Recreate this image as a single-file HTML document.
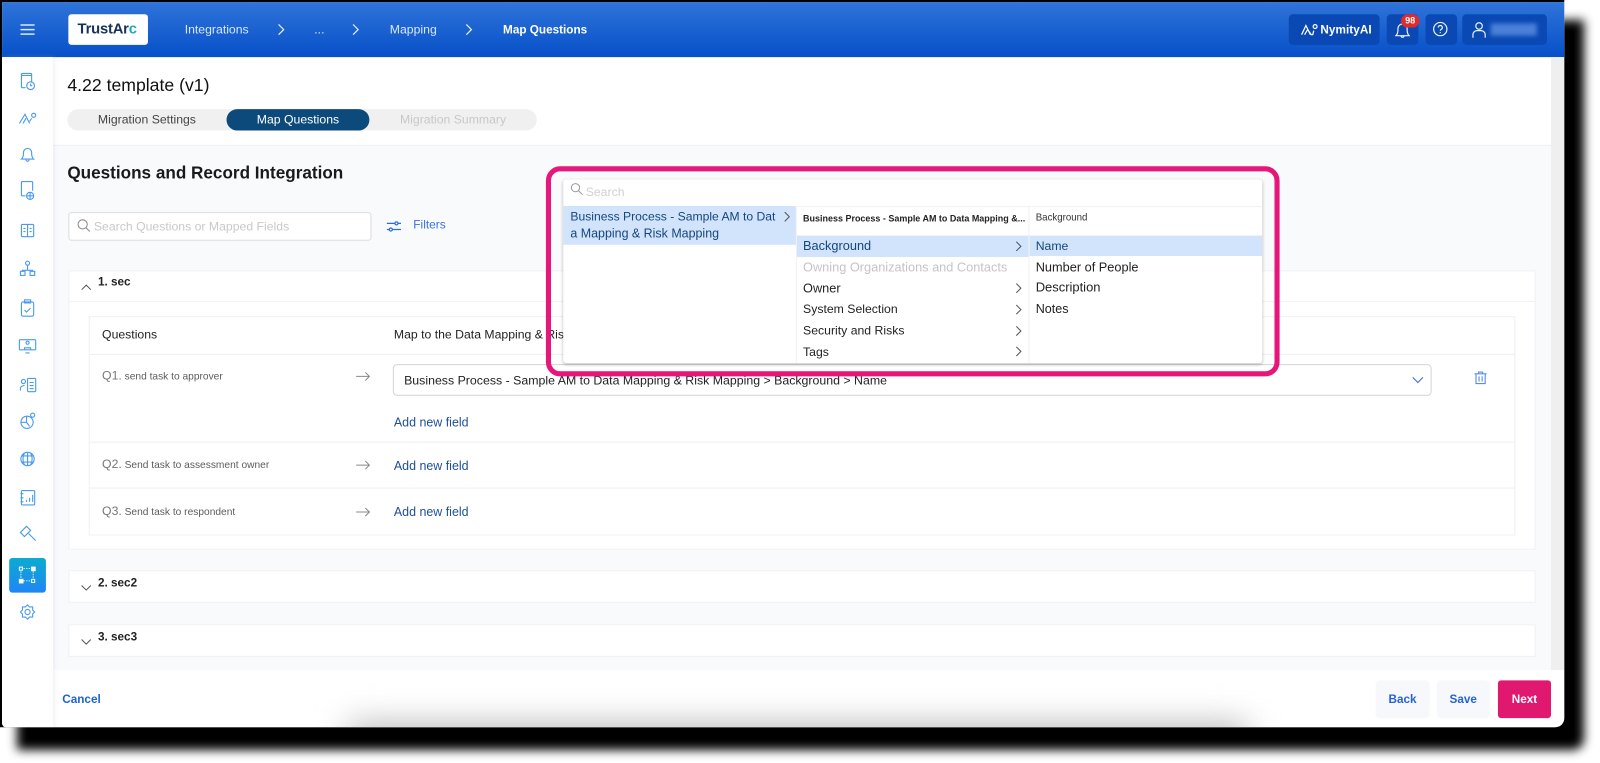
<!DOCTYPE html>
<html><head><meta charset="utf-8"><style>
html,body{margin:0;padding:0;width:1600px;height:763px;overflow:hidden;background:#fff}
#w{position:absolute;left:0;top:0;width:1568px;height:748px;transform:scale(1.0204,1.02);transform-origin:0 0;font-family:"Liberation Sans",sans-serif;color:#222}
#w div,#w span.a,#w svg{position:absolute}
.t{white-space:nowrap;line-height:16px;height:16px}
.b{font-weight:bold}
</style></head><body><div id="w">
<div style="left:0;top:0;width:1533px;height:713px;background:#000;border-radius:0 0 10px 0;box-shadow:18px 21px 10px 1px #000"></div>
<div id="f" style="left:2px;top:2px;width:1531px;height:711px;background:#fff;border-radius:0 0 9px 4px;overflow:hidden">
<div style="left:-2px;top:-2px;width:1568px;height:748px">
<!-- header -->
<div style="left:2px;top:2px;width:1531px;height:54px;background:linear-gradient(#3074d9,#0650c9)"></div>
<svg style="left:20px;top:23px" width="14" height="12"><path d="M0 1.5h14M0 6h14M0 10.5h14" stroke="#dbe6fa" stroke-width="1.5"/></svg>
<div style="left:67px;top:14px;width:78px;height:30px;background:#fff;border-radius:3px"></div>
<div class="t b" style="left:76px;top:21px;font-size:14.500px;letter-spacing:-.2px;color:#17305a">TrustAr<span style="color:#19a9c4">c</span></div>
<div class="t" style="left:181px;top:21px;font-size:12px;color:#dce7fa">Integrations</div>
<svg style="left:272px;top:23px" width="8" height="12"><path d="M1 1l5 5-5 5" fill="none" stroke="#e4ecfb" stroke-width="1.2"/></svg>
<div class="t" style="left:308px;top:21px;font-size:12px;color:#dce7fa">...</div>
<svg style="left:345px;top:23px" width="8" height="12"><path d="M1 1l5 5-5 5" fill="none" stroke="#e4ecfb" stroke-width="1.2"/></svg>
<div class="t" style="left:382px;top:21px;font-size:12px;color:#dce7fa">Mapping</div>
<svg style="left:456px;top:23px" width="8" height="12"><path d="M1 1l5 5-5 5" fill="none" stroke="#e4ecfb" stroke-width="1.2"/></svg>
<div class="t b" style="left:493px;top:22px;font-size:11.500px;color:#fff">Map Questions</div>
<div style="left:1263px;top:14px;width:89px;height:30px;background:#0a49b4;border-radius:4px"></div>
<svg style="left:1275px;top:23px" width="17" height="12" fill="none" stroke="#fff" stroke-width="1.200"><path d="M.6 11L4.800 2l4.400 9M3.500 11L6.500 6M8 8l2 3h1.500l1-4"/><circle cx="13.800" cy="3" r="1.900"/></svg>
<div class="t b" style="left:1294px;top:22px;font-size:11.500px;letter-spacing:.05px;color:#fff">NymityAI</div>
<div style="left:1359px;top:14px;width:31px;height:30px;background:#0a49b4;border-radius:4px"></div>
<svg style="left:1367px;top:21px" width="15" height="18" fill="none" stroke="#e8effb" stroke-width="1.2"><path d="M1 14h13c-2-2-2-4-2-7a4.500 4.500 0 0 0-9 0c0 3 0 5-2 7zM6 14.500a1.600 1.600 0 0 0 3 0"/></svg>
<div class="t b" style="left:1373px;top:14px;width:18px;height:13px;line-height:13px;background:#e22a2a;border-radius:7px;color:#fff;font-size:9px;text-align:center">98</div>
<div style="left:1397px;top:14px;width:31px;height:30px;background:#0a49b4;border-radius:4px"></div>
<svg style="left:1404px;top:21px" width="15" height="15" fill="none" stroke="#e8effb" stroke-width="1.2"><circle cx="7.500" cy="7.500" r="6.500"/><path d="M5.500 6a2 2 0 1 1 3 1.700c-.7.4-1 .8-1 1.500M7.500 10.500v1"/></svg>
<div style="left:1433px;top:14px;width:83px;height:30px;background:#0a49b4;border-radius:4px"></div>
<svg style="left:1442px;top:21px" width="15" height="17" fill="none" stroke="#e8effb" stroke-width="1.2"><circle cx="7.500" cy="4.500" r="3.200"/><path d="M1.500 16v-3a4 4 0 0 1 4-4h4a4 4 0 0 1 4 4v3"/></svg>
<div style="left:1461px;top:23px;width:45px;height:12px;background:#4a80d8;filter:blur(2px)"></div>
<!-- sidebar -->
<div style="left:2px;top:56px;width:50px;height:657px;background:#fff;box-shadow:2px 0 4px rgba(190,200,225,.25);z-index:2"></div>
<div style="left:9px;top:547px;width:36px;height:34px;background:linear-gradient(#0cabd0,#1f86f5);border-radius:3px;z-index:3"></div>
<svg style="left:0;top:60px;z-index:3" width="52" height="560" fill="none" stroke="#4a9bf0" stroke-width="1.100">
<path d="M21 25V13a1 1 0 0 1 1-1h8a1 1 0 0 1 1 1v8M21 25a1 1 0 0 0 1 1h3M21 14h10"/><circle cx="30" cy="24" r="3.800"/><path d="M30 22v2h1.500"/>
<path d="M19 61l5.500-9 4.500 9M22.500 61l3-5M29 59l2-3"/><circle cx="33" cy="53" r="2"/>
<path d="M21 96h12c-2-2-2-4-2-6.500a4 4 0 0 0-8 0c0 2.500 0 4.500-2 6.500zM25.500 96.500a1.500 1.500 0 0 0 3 0"/>
<path d="M21 131v-12a1 1 0 0 1 1-1h9a1 1 0 0 1 1 1v8M21 131a1 1 0 0 0 1 1h3"/><circle cx="29.500" cy="132" r="3.500"/><path d="M26 132h7M29.500 128.500v7"/>
<rect x="21" y="160" width="12" height="12" rx="1"/><path d="M27 160v12M23 164h2M29 164h2M23 167h2M29 167h2"/>
<circle cx="27" cy="198" r="2"/><rect x="20" y="206" width="4.500" height="4"/><rect x="29.500" y="206" width="4.500" height="4"/><path d="M27 200v5M22 206v-1h10v1"/>
<rect x="21" y="236" width="12" height="14" rx="1.500"/><rect x="24" y="234" width="6" height="3"/><path d="M24 244l2 2 4-4"/>
<rect x="19" y="273" width="16" height="10" rx="1"/><circle cx="27" cy="276" r="1.500"/><path d="M24 283v-2h6v2M25 286h4"/>
<rect x="27" y="311" width="8" height="13" rx="1"/><path d="M29 315h4M29 318h4M29 321h4"/><circle cx="23" cy="314" r="2"/><path d="M20 323v-2c0-2 2-3 4-3"/>
<circle cx="26.500" cy="354" r="6"/><circle cx="32" cy="347" r="2"/><path d="M21 354h5l3 4M26 348v6"/>
<circle cx="27" cy="390" r="6.500"/><path d="M27 383.500v13M21 387h12M21 393h12M24 384c-2 4-2 8 0 12M30 384c2 4 2 8 0 12"/>
<rect x="21" y="421" width="13" height="14" rx="1"/><path d="M20 424h3M20 428h3M20 432h3M26 432v-2M29 432v-4M32 432v-7"/>
<path d="M20 462l6-6 4 4-6 6zM28 463l7 7"/>
<circle cx="27" cy="540" r="2.500"/><path d="M27 533l2 2h3v3l2 2-2 2v3h-3l-2 2-2-2h-3v-3l-2-2 2-2v-3h3z"/>
</svg>
<svg style="left:18px;top:555px;z-index:4" width="18" height="18" fill="#fff" stroke="#fff"><rect x="1" y="1" width="3" height="3" fill="none"/><rect x="13" y="1" width="3.500" height="3.500"/><rect x="1" y="13" width="3.500" height="3.500"/><rect x="13" y="13" width="3" height="3" fill="none"/><path d="M5 2.500h7M5 14.500h7M2.500 5v7M14.500 5v7" stroke-dasharray="1.500 1" stroke-width=".8"/></svg>
<!-- top panel -->
<div style="left:52px;top:142px;width:1468px;height:515px;background:#f9fafc;border-top:1px solid #eef0f5;box-sizing:border-box"></div>
<div style="left:1520px;top:56px;width:13px;height:601px;background:#efefef"></div>
<div class="t" style="left:66px;top:74px;font-size:17.300px;line-height:18px;height:18px;color:#111">4.22 template (v1)</div>
<div style="left:66px;top:107px;width:460px;height:21px;background:#f0f0f0;border-radius:11px"></div>
<div style="left:222px;top:107px;width:140px;height:21px;background:#0d4a7c;border-radius:11px"></div>
<div class="t" style="left:66px;width:156px;text-align:center;top:109px;font-size:12px;color:#444">Migration Settings</div>
<div class="t" style="left:222px;width:140px;text-align:center;top:109px;font-size:12px;color:#fff">Map Questions</div>
<div class="t" style="left:362px;width:164px;text-align:center;top:109px;font-size:12px;color:#c8c8c8">Migration Summary</div>
<div class="t b" style="left:66px;top:161px;font-size:16.800px;line-height:18px;height:18px;color:#1a1a1a">Questions and Record Integration</div>
<!-- search -->
<div style="left:67px;top:208px;width:297px;height:28px;background:#fff;border:1px solid #dcdcdc;border-radius:3px;box-sizing:border-box"></div>
<svg style="left:75px;top:214px" width="14" height="14" fill="none" stroke="#888" stroke-width="1"><circle cx="6" cy="6" r="4.500"/><path d="M9.500 9.500l3.500 3.500"/></svg>
<div class="t" style="left:92px;top:214px;font-size:12px;color:#c9c9c9">Search Questions or Mapped Fields</div>
<svg style="left:379px;top:216px" width="14" height="12" fill="none" stroke="#2f6bd3" stroke-width="1.200"><path d="M0 3h14M0 9h14"/><circle cx="9.500" cy="3" r="1.500" fill="#fff"/><circle cx="4" cy="9" r="1.500" fill="#fff"/></svg>
<div class="t" style="left:405px;top:213px;font-size:11.700px;color:#3a72dc">Filters</div>
<!-- section 1 -->
<div style="left:67px;top:265px;width:1438px;height:274px;background:#fff;border:1px solid #f0f1f5;box-sizing:border-box"></div>
<div style="left:67px;top:295px;width:1438px;height:1px;background:#f1f2f5"></div>
<svg style="left:79px;top:278px" width="11" height="7" fill="none" stroke="#555"><path d="M1 6l4.500-4.500L10 6"/></svg>
<div class="t b" style="left:96px;top:269px;font-size:11.500px;color:#222">1. sec</div>
<div style="left:87px;top:310px;width:1398px;height:215px;background:#fff;border:1px solid #eff0f3;box-sizing:border-box"></div>
<div style="left:87px;top:347px;width:1398px;height:1px;background:#eff0f3"></div>
<div style="left:87px;top:433px;width:1398px;height:1px;background:#eff0f3"></div>
<div style="left:87px;top:478px;width:1398px;height:1px;background:#eff0f3"></div>
<div class="t" style="left:100px;top:320px;font-size:12px;color:#222">Questions</div>
<div class="t" style="left:386px;top:320px;font-size:12px;color:#222">Map to the Data Mapping &amp; Risk</div>
<div class="t" style="left:100px;top:360px;font-size:10px;color:#5c5c5c"><span style="font-size:12px;color:#777">Q1.</span> send task to approver</div>
<div class="t" style="left:100px;top:447px;font-size:10px;color:#5c5c5c"><span style="font-size:12px;color:#777">Q2.</span> Send task to assessment owner</div>
<div class="t" style="left:100px;top:493px;font-size:10px;color:#5c5c5c"><span style="font-size:12px;color:#777">Q3.</span> Send task to respondent</div>
<svg style="left:349px;top:364px" width="14" height="10" fill="none" stroke="#888"><path d="M0 5h13M9 1l4 4-4 4"/></svg>
<svg style="left:349px;top:451px" width="14" height="10" fill="none" stroke="#888"><path d="M0 5h13M9 1l4 4-4 4"/></svg>
<svg style="left:349px;top:497px" width="14" height="10" fill="none" stroke="#888"><path d="M0 5h13M9 1l4 4-4 4"/></svg>
<div style="left:385px;top:357px;width:1018px;height:31px;background:#fff;border:1px solid #d4d4d4;border-radius:4px;box-sizing:border-box"></div>
<div class="t" style="left:396px;top:365px;font-size:12.100px;color:#222">Business Process - Sample AM to Data Mapping &amp; Risk Mapping &gt; Background &gt; Name</div>
<svg style="left:1384px;top:369px" width="11" height="7" fill="none" stroke="#3a72dc" stroke-width="1.100"><path d="M.5 1l5 5 5-5"/></svg>
<svg style="left:1445px;top:364px" width="12" height="13" fill="none" stroke="#5b8ee6" stroke-width="1.100"><path d="M0 2.500h12M4 2V.8h4V2M1.500 2.500V12h9V2.500M4.500 5v5M7.500 5v5"/></svg>
<div class="t" style="left:386px;top:406px;font-size:12.200px;color:#1f4f96">Add new field</div>
<div class="t" style="left:386px;top:449px;font-size:12.200px;color:#1f4f96">Add new field</div>
<div class="t" style="left:386px;top:494px;font-size:12.200px;color:#1f4f96">Add new field</div>
<!-- section 2/3 -->
<div style="left:67px;top:559px;width:1438px;height:32px;background:#fff;border:1px solid #f0f1f5;box-sizing:border-box"></div>
<svg style="left:79px;top:573px" width="11" height="7" fill="none" stroke="#555"><path d="M1 1l4.500 4.500L10 1"/></svg>
<div class="t b" style="left:96px;top:564px;font-size:11.500px;color:#222">2. sec2</div>
<div style="left:67px;top:612px;width:1438px;height:32px;background:#fff;border:1px solid #f0f1f5;box-sizing:border-box"></div>
<svg style="left:79px;top:626px" width="11" height="7" fill="none" stroke="#555"><path d="M1 1l4.500 4.500L10 1"/></svg>
<div class="t b" style="left:96px;top:617px;font-size:11.500px;color:#222">3. sec3</div>
<!-- footer -->
<div style="left:52px;top:657px;width:1481px;height:56px;background:#fff;overflow:hidden"><div style="left:290px;top:52px;width:880px;height:40px;background:#bbb;filter:blur(16px)"></div></div>
<div class="t b" style="left:61px;top:678px;font-size:11.500px;color:#1b62d6">Cancel</div>
<div style="left:1348px;top:667px;width:53px;height:37px;background:#f7f8fc;border-radius:4px"></div>
<div class="t b" style="left:1348px;width:53px;text-align:center;top:678px;font-size:11.500px;color:#2563d3">Back</div>
<div style="left:1408px;top:667px;width:52px;height:37px;background:#f7f8fc;border-radius:4px"></div>
<div class="t b" style="left:1408px;width:52px;text-align:center;top:678px;font-size:11.500px;color:#2563d3">Save</div>
<div style="left:1468px;top:667px;width:52px;height:37px;background:#e0186f;border-radius:3px"></div>
<div class="t b" style="left:1468px;width:52px;text-align:center;top:678px;font-size:11.500px;color:#fff">Next</div>
<!-- overlay -->
<div style="left:535px;top:163px;width:719px;height:206px;border:5px solid #e6177a;border-radius:14px;box-sizing:border-box;z-index:5"></div>
<div style="left:552px;top:176px;width:685px;height:180px;background:#fff;border-radius:3px;box-shadow:0 1px 3px rgba(0,0,0,.25);z-index:6"></div>
<div style="left:552px;top:202px;width:685px;height:1px;background:#f1f1f1;z-index:6"></div>
<div style="left:780px;top:202px;width:1px;height:154px;background:#f1f1f1;z-index:6"></div>
<div style="left:1008px;top:202px;width:1px;height:154px;background:#f1f1f1;z-index:6"></div>
<div style="left:552px;top:202px;width:228px;height:38px;background:#d2e4fb;z-index:6"></div>
<div style="left:781px;top:231px;width:227px;height:21px;background:#d2e4fb;z-index:6"></div>
<div style="left:1009px;top:231px;width:228px;height:20px;background:#d2e4fb;z-index:6"></div>
<div id="d" style="left:0;top:0;width:1568px;height:748px;z-index:7">
<svg style="left:559px;top:179px" width="13" height="13" fill="none" stroke="#999"><circle cx="5" cy="5" r="4"/><path d="M8 8l4 4"/></svg>
<div class="t" style="left:574px;top:180px;font-size:12px;color:#d0d0d0">Search</div>
<div class="t" style="left:559px;top:204px;font-size:11.900px;color:#15467f">Business Process - Sample AM to Dat</div>
<div class="t" style="left:559px;top:221px;font-size:12.200px;color:#15467f">a Mapping &amp; Risk Mapping</div>
<svg style="left:768px;top:207px" width="7" height="11" fill="none" stroke="#555"><path d="M1 1l4.500 4.500L1 10"/></svg>
<div class="t b" style="left:787px;top:206px;font-size:8.800px;color:#222">Business Process - Sample AM to Data Mapping &amp;...</div>
<div class="t" style="left:1015px;top:206px;font-size:9.500px;color:#333">Background</div>
<div class="t" style="left:787px;top:233px;font-size:12.500px;color:#15467f">Background</div>
<div class="t" style="left:787px;top:254px;font-size:12.500px;color:#c4c4c4">Owning Organizations and Contacts</div>
<div class="t" style="left:787px;top:275px;font-size:12.500px;color:#222">Owner</div>
<div class="t" style="left:787px;top:295px;font-size:12px;color:#222">System Selection</div>
<div class="t" style="left:787px;top:316px;font-size:12px;color:#222">Security and Risks</div>
<div class="t" style="left:787px;top:337px;font-size:12px;color:#222">Tags</div>
<svg style="left:995px;top:236px" width="7" height="11" fill="none" stroke="#456"><path d="M1 1l4.500 4.500L1 10"/></svg>
<svg style="left:995px;top:277px" width="7" height="11" fill="none" stroke="#555"><path d="M1 1l4.500 4.500L1 10"/></svg>
<svg style="left:995px;top:298px" width="7" height="11" fill="none" stroke="#555"><path d="M1 1l4.500 4.500L1 10"/></svg>
<svg style="left:995px;top:319px" width="7" height="11" fill="none" stroke="#555"><path d="M1 1l4.500 4.500L1 10"/></svg>
<svg style="left:995px;top:339px" width="7" height="11" fill="none" stroke="#555"><path d="M1 1l4.500 4.500L1 10"/></svg>
<div class="t" style="left:1015px;top:233px;font-size:12px;color:#15467f">Name</div>
<div class="t" style="left:1015px;top:254px;font-size:12.500px;color:#222">Number of People</div>
<div class="t" style="left:1015px;top:274px;font-size:12.700px;color:#222">Description</div>
<div class="t" style="left:1015px;top:295px;font-size:12.300px;color:#222">Notes</div>
</div>
</div>
</div>
</div></body></html>
